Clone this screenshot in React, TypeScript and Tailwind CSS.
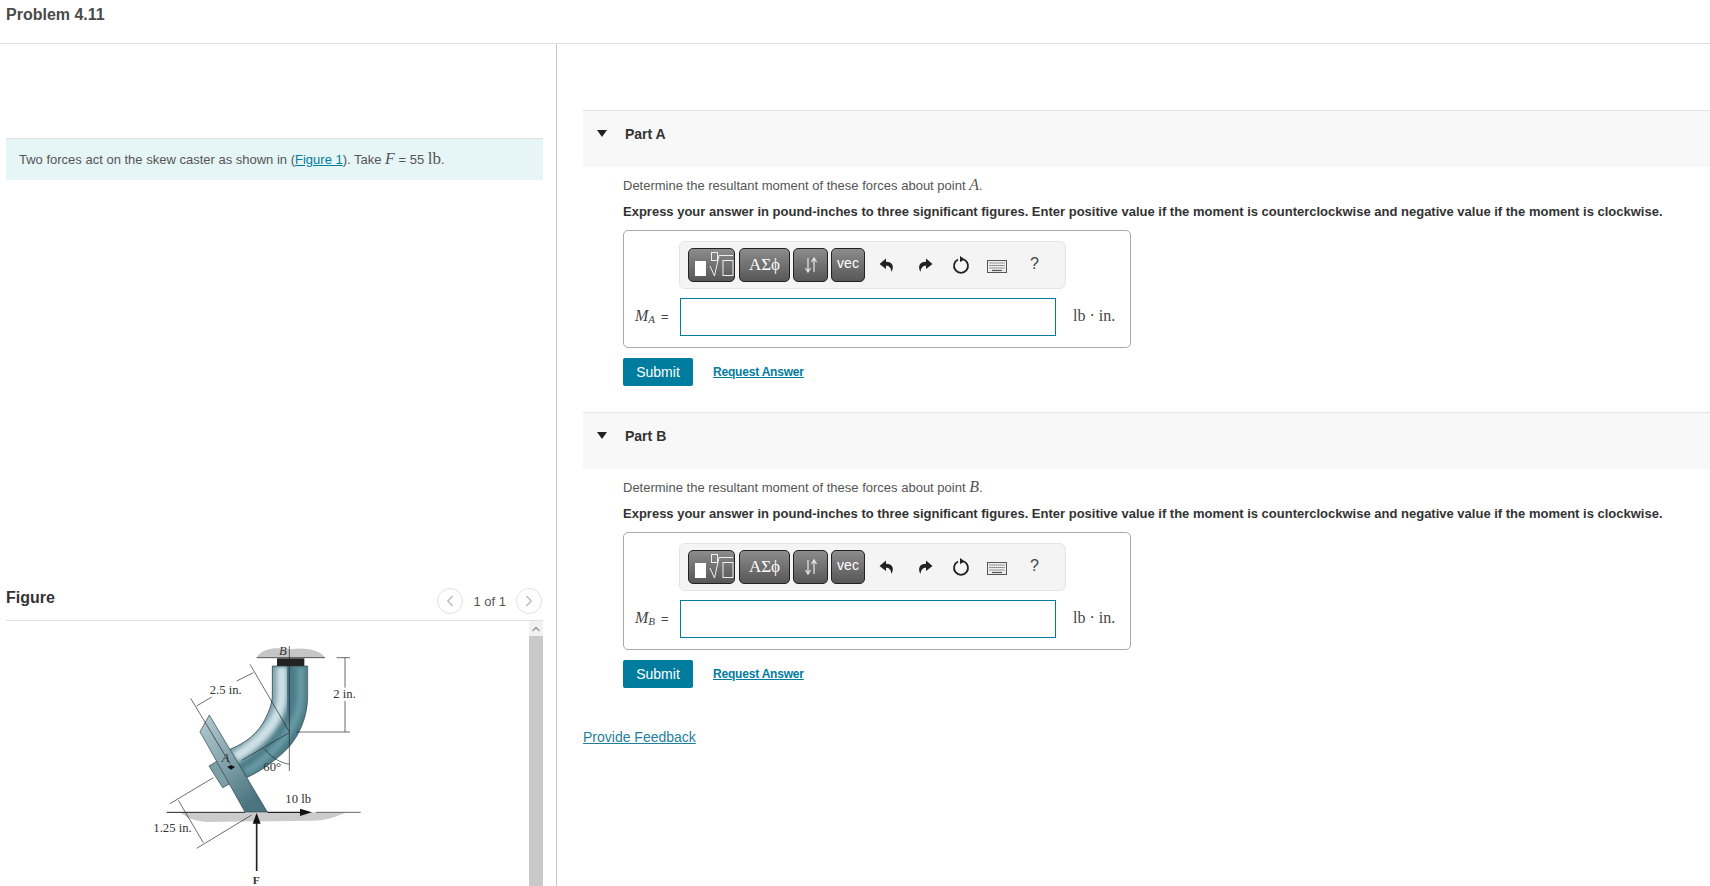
import React from 'react';
import { ChevronLeft, ChevronRight, ChevronUp } from 'lucide-react';

const Caster = () => (
    <svg width="250" height="266" viewBox="0 0 750 798" className="shrink-0">
        <defs>
            <linearGradient id="plate" x1="0" y1="0" x2="0.6" y2="1">
                <stop offset="0" stopColor="#b4cbd2" />
                <stop offset="0.5" stopColor="#86a6af" />
                <stop offset="1" stopColor="#4a7480" />
            </linearGradient>
            <filter id="soft">
                <feGaussianBlur stdDeviation="8" />
            </filter>
            <clipPath id="elbow">
                <path d="M427 135 H533 V225 C533 290 505 350 470 385 C430 425 385 455 345 472 L300 385 C350 365 385 335 405 295 C420 265 427 245 427 220 Z" />
            </clipPath>
        </defs>

        {/* ground and ceiling */}
        <path d="M380 110 C395 82 435 78 478 85 C520 78 570 85 585 110 Z" fill="#c6c6c6" />
        <path d="M150 574 L650 574 C610 590 590 600 540 599 L230 603 C190 600 170 590 150 574 Z" fill="#cbcbcb" />
        <path d="M380 110 H585" stroke="#555" strokeWidth="3" />
        <rect x="441" y="112" width="82" height="23" fill="#222" />

        {/* elbow */}
        <g clipPath="url(#elbow)">
            <rect x="280" y="130" width="260" height="350" fill="#4a7a86" />
            <path d="M512 135 V225 C512 300 445 395 345 455" fill="none" stroke="#6a9ca8" strokeWidth="22" filter="url(#soft)" />
            <path d="M425 135 V225 C425 280 370 350 290 385" fill="none" stroke="#7fa3ad" strokeWidth="22" filter="url(#soft)" />
            <path d="M455 135 V225 C455 290 398 360 312 410" fill="none" stroke="#cfe1e6" strokeWidth="36" filter="url(#soft)" />
        </g>
        <path d="M427 135 H533 V225 C533 290 505 350 470 385 C430 425 385 455 345 472 M300 385 C350 365 385 335 405 295 C420 265 427 245 427 220 V135" fill="none" stroke="#2b3d42" strokeWidth="2" />

        {/* hub and wheel */}
        <path d="M237 435 L262 420 L305 485 L278 500 Z" fill="#7f9fa8" stroke="#2b3d42" strokeWidth="2" />
        <path d="M238 282 L412 573 H345 L210 332 Z" fill="url(#plate)" stroke="#2b3d42" strokeWidth="2" />
        <path d="M303 432 L315 438 L303 446 L292 438 Z" fill="#111" />

        {/* dimension lines */}
        <g stroke="#222" strokeWidth="2" fill="none">
            <path d="M182 232 L300 428" />
            <path d="M360 130 L478 332" />
            <path d="M200 255 L245 228 M320 180 L370 155" />
            <path d="M478 75 V450" />
            <path d="M478 335 L335 418" />
            <path d="M500 333 H660 M620 110 H660" />
            <path d="M645 110 V200 M645 240 V333" />
            <path d="M405 385 C425 410 450 425 478 430" />
            <path d="M120 548 L250 470" />
            <path d="M200 682 L365 582" />
            <path d="M145 538 L220 665" />
        </g>
        <path d="M110 574 H345" stroke="#222" strokeWidth="3" />
        <path d="M412 574 H515" stroke="#222" strokeWidth="4" />
        <path d="M510 563 L546 574 L510 585 Z" fill="#111" />
        <path d="M558 574 H692" stroke="#666" strokeWidth="3" />
        <path d="M380 750 V600" stroke="#222" strokeWidth="5" />
        <path d="M380 576 L392 608 H368 Z" fill="#111" />

        <g fontFamily="'Liberation Serif', serif" fontSize="38" fill="#333">
            <text x="239" y="218">2.5 in.</text>
            <text x="610" y="230">2 in.</text>
            <text x="466" y="547">10 lb</text>
            <text x="70" y="632">1.25 in.</text>
            <text x="400" y="451">60°</text>
            <text x="275" y="422" fontStyle="italic">A</text>
            <text x="447" y="101" fontStyle="italic">B</text>
            <text x="368" y="790" fontWeight="bold" fontSize="34">F</text>
        </g>
    </svg>
);

const ToolBtn = ({ className, children }: { className: string; children: React.ReactNode }) => (
    <div className={`h-[34px] flex items-center justify-center rounded-[5px] border border-[#222] bg-gradient-to-b from-[#8c8c8c] to-[#575757] text-white ${className}`}>
        {children}
    </div>
);

const Toolbar = () => (
    <div className="ml-[55px] w-[387px] h-[48px] flex items-center pl-[8px] rounded-[6px] border border-[#e4e4e4] bg-[#f4f4f4]">
        <ToolBtn className="w-[47px]">
            <svg width="45" height="32" viewBox="0 0 45 32">
                <rect x="6" y="12" width="11" height="15" fill="#fff" />
                <rect x="22.5" y="3.5" width="6" height="8" fill="none" stroke="#eee" strokeWidth="1" />
                <path d="M21 17 L25.5 27 L30 6.5 H44" fill="none" stroke="#eee" strokeWidth="1" />
                <rect x="34" y="11.5" width="10" height="15" fill="none" stroke="#eee" strokeWidth="1" />
            </svg>
        </ToolBtn>
        <ToolBtn className="w-[51px] ml-[4px] font-['Liberation_Serif',serif] text-[17px]">ΑΣϕ</ToolBtn>
        <ToolBtn className="w-[35px] ml-[3px]">
            <svg width="16" height="18" viewBox="0 0 16 18">
                <path d="M5 2 V15 M2.5 12 L5 16 L7.5 12 M11 16 V3 M8.5 6 L11 2 L13.5 6" fill="none" stroke="#e8e8e8" strokeWidth="1.2" />
            </svg>
        </ToolBtn>
        <ToolBtn className="w-[34px] ml-[3px] text-[14px] pb-[3px]">vec</ToolBtn>
        <svg width="16" height="16" viewBox="0 0 16 16" className="ml-[14px]">
            <path d="M7 1.5 L0.5 7 L7 12 V8.8 C10 8.8 12 10.5 12.5 15 C15.5 9.5 13.5 4.8 7 4.8 Z" fill="#222" />
        </svg>
        <svg width="16" height="16" viewBox="0 0 16 16" className="ml-[22px]">
            <path d="M9 1.5 L15.5 7 L9 12 V8.8 C6 8.8 4 10.5 3.5 15 C0.5 9.5 2.5 4.8 9 4.8 Z" fill="#222" />
        </svg>
        <svg width="18" height="20" viewBox="0 0 18 20" className="ml-[19px]">
            <path d="M6 4.5 A7 7 0 1 0 12 4.5" fill="none" stroke="#222" strokeWidth="1.8" />
            <path d="M8 1 L13 4.5 L8 7 Z" fill="#222" />
        </svg>
        <svg width="20" height="13" viewBox="0 0 20 13" className="ml-[17px] mt-[3px]">
            <rect x="0.5" y="0.5" width="19" height="12" fill="#eee" stroke="#555" />
            <path d="M2.5 3 H17.5 M2.5 5.5 H17.5 M2.5 8 H17.5" stroke="#555" strokeWidth="1.2" strokeDasharray="1.2 0.8" />
            <path d="M5 10.5 H15" stroke="#555" strokeWidth="1.2" />
        </svg>
        <span className="ml-[23px] mb-[3px] text-[16px] text-[#444]">?</span>
    </div>
);

const Part = ({ letter }: { letter: string }) => (
    <section>
        <div className="h-[57px] flex pt-[13px] border-t border-[#e4e4e4] bg-[#f8f8f8]">
            <div className="ml-[14px] mt-[6px] h-0 w-0 border-x-[5.5px] border-t-[7px] border-x-transparent border-t-[#222]" />
            <h3 className="ml-[18px] text-[14px] leading-[20px] font-bold text-[#333]">Part {letter}</h3>
        </div>
        <div className="pl-[40px]">
            <p className="mt-[9px] h-[20px] text-[13px] leading-[20px] text-[#555]">
                Determine the resultant moment of these forces about point <i className="font-['Liberation_Serif',serif] text-[16px] leading-none">{letter}</i>.
            </p>
            <p className="mt-[6px] text-[13px] leading-[20px] font-bold text-[#333] whitespace-nowrap">
                Express your answer in pound-inches to three significant figures. Enter positive value if the moment is counterclockwise and negative value if the moment is clockwise.
            </p>
            <div className="mt-[8px] w-[508px] h-[118px] pt-[10px] rounded-[5px] border border-[#aaa]">
                <Toolbar />
                <div className="mt-[9px] flex items-center">
                    <span className="w-[56px] pl-[11px] mb-[3px] text-[13px] text-[#444] whitespace-nowrap">
                        <i className="font-['Liberation_Serif',serif] text-[16px]">M<sub className="text-[11px]">{letter}</sub></i><span className="ml-[6px]">=</span>
                    </span>
                    <input className="w-[376px] h-[38px] border border-[#007c9e] bg-white" />
                    <span className="ml-[17px] mb-[3px] font-['Liberation_Serif',serif] text-[16px] text-[#444] whitespace-nowrap">lb · in.</span>
                </div>
            </div>
            <div className="mt-[10px] flex items-center">
                <button className="w-[70px] h-[28px] rounded-[2px] bg-[#007c9e] text-white text-[14px]">Submit</button>
                <a className="ml-[20px] text-[12px] font-bold tracking-[-0.2px] text-[#007c9e] underline">Request Answer</a>
            </div>
        </div>
    </section>
);

export default function App() {
    return (
        <div className="h-[886px] overflow-hidden bg-white font-['Liberation_Sans',sans-serif]">
            <header className="h-[44px] pl-[6px] pt-[5px] border-b border-[#dfdfdf]">
                <h1 className="text-[16px] leading-[20px] font-bold text-[#4a4a4a]">Problem 4.11</h1>
            </header>
            <div className="flex h-[842px]">
                {/* left pane */}
                <div className="w-[557px] shrink-0 pl-[6px] pr-[13px] border-r border-[#bccbdc]">
                    <div className="mt-[94px] h-[42px] pl-[13px] pb-[2px] flex items-center border-t border-[#dfdfdf] bg-[#e6f5f6] text-[13px] text-[#555]">
                        <span>
                            Two forces act on the skew caster as shown in (<a className="text-[#007c9e] underline">Figure 1</a>). Take <i className="font-['Liberation_Serif',serif] text-[16px]">F</i> = 55 <span className="font-['Liberation_Serif',serif] text-[17px]">lb</span>.
                        </span>
                    </div>
                    <div className="mt-[402px] h-[39px] flex items-center border-b border-[#dfdfdf]">
                        <h2 className="mb-[6px] text-[16px] font-bold text-[#333]">Figure</h2>
                        <div className="ml-auto mr-[1px] flex items-center text-[13px] text-[#555]">
                            <span className="w-[26px] h-[26px] flex items-center justify-center rounded-full border border-[#e2e2e2] text-[#bbb]">
                                <ChevronLeft size={18} />
                            </span>
                            <span className="mx-[10px] mt-[1px]">1 of 1</span>
                            <span className="w-[26px] h-[26px] flex items-center justify-center rounded-full border border-[#e2e2e2] text-[#bbb]">
                                <ChevronRight size={18} />
                            </span>
                        </div>
                    </div>
                    <div className="flex h-[266px]">
                        <div className="ml-[124px]">
                            <Caster />
                        </div>
                        <div className="ml-auto w-[14px] flex flex-col">
                            <div className="h-[15px] flex items-center justify-center bg-[#f1f1f1] text-[#999]">
                                <ChevronUp size={12} strokeWidth={3} />
                            </div>
                            <div className="flex-1 bg-[#c9c9c9]" />
                        </div>
                    </div>
                </div>
                {/* right pane */}
                <main className="flex-1 min-w-0 pl-[26px] pt-[66px]">
                    <Part letter="A" />
                    <div className="mt-[26px]">
                        <Part letter="B" />
                    </div>
                    <a className="block mt-[39px] text-[14px] leading-[20px] text-[#1f7f9c] underline">Provide Feedback</a>
                </main>
            </div>
        </div>
    );
}
